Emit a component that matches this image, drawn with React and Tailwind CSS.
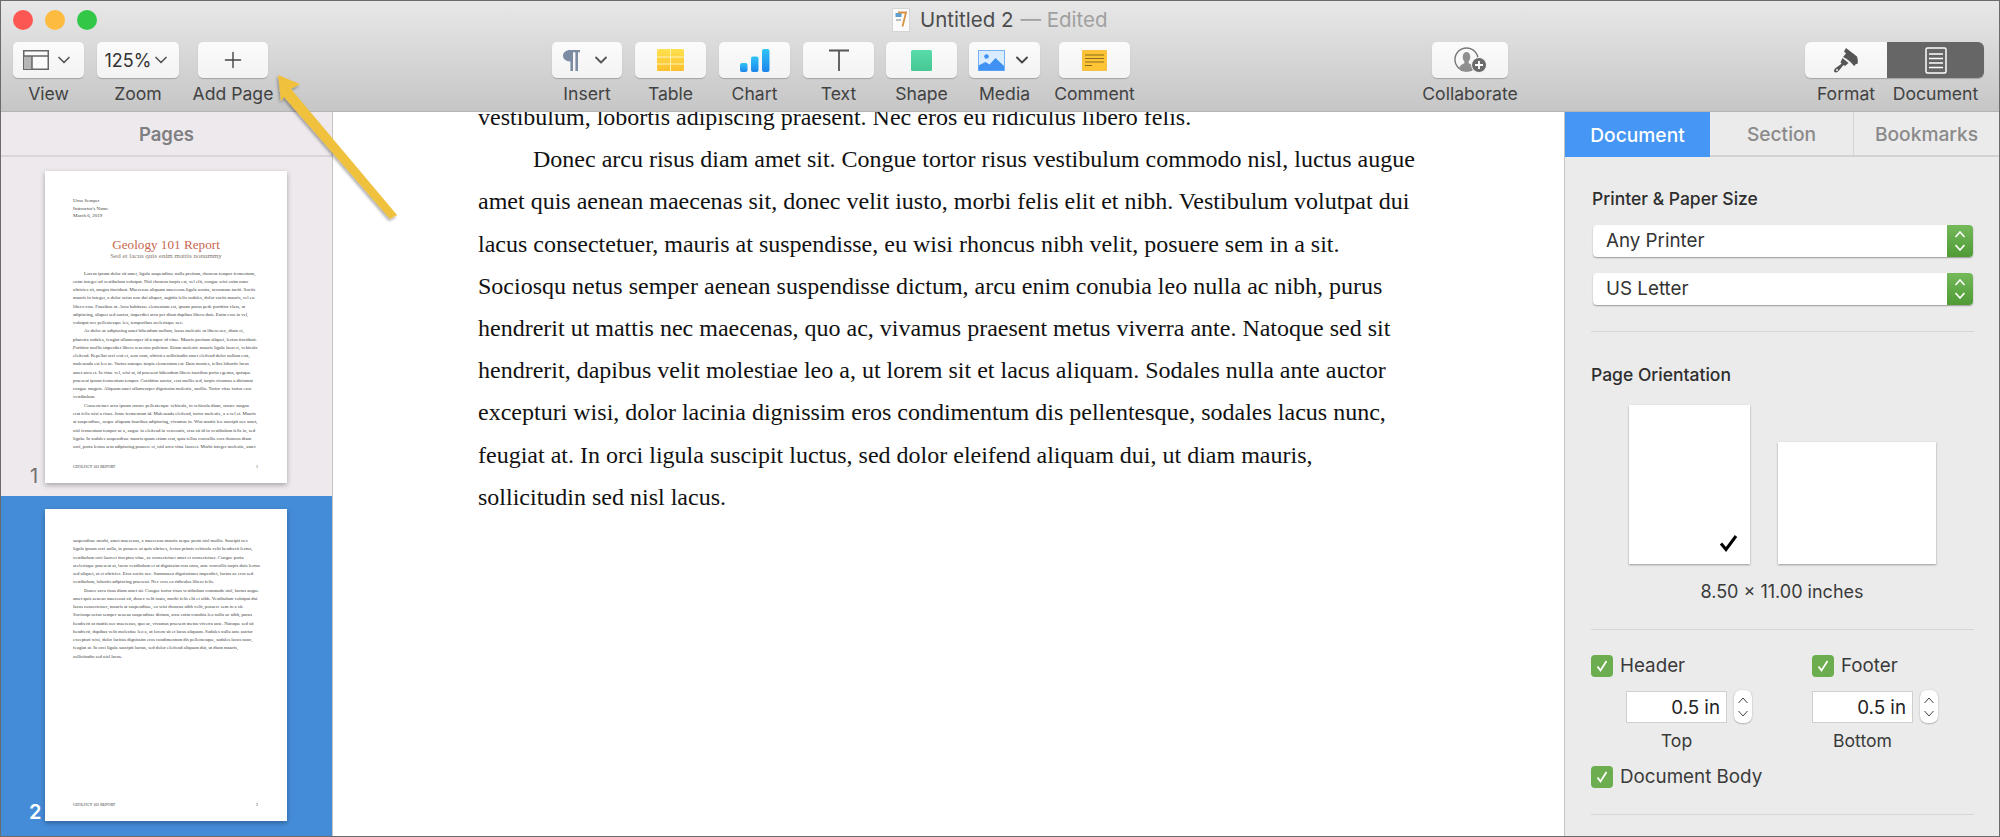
import React from 'react';
import { ChevronDown, Plus } from 'lucide-react';

const sans = "font-['Inter','Liberation_Sans',sans-serif]";
const serif = "font-['Liberation_Serif',serif]";

const bodyLines = [
  'vestibulum, lobortis adipiscing praesent. Nec eros eu ridiculus libero felis.',
  'Donec arcu risus diam amet sit. Congue tortor risus vestibulum commodo nisl, luctus augue',
  'amet quis aenean maecenas sit, donec velit iusto, morbi felis elit et nibh. Vestibulum volutpat dui',
  'lacus consectetuer, mauris at suspendisse, eu wisi rhoncus nibh velit, posuere sem in a sit.',
  'Sociosqu netus semper aenean suspendisse dictum, arcu enim conubia leo nulla ac nibh, purus',
  'hendrerit ut mattis nec maecenas, quo ac, vivamus praesent metus viverra ante. Natoque sed sit',
  'hendrerit, dapibus velit molestiae leo a, ut lorem sit et lacus aliquam. Sodales nulla ante auctor',
  'excepturi wisi, dolor lacinia dignissim eros condimentum dis pellentesque, sodales lacus nunc,',
  'feugiat at. In orci ligula suscipit luctus, sed dolor eleifend aliquam dui, ut diam mauris,',
  'sollicitudin sed nisl lacus.',
];

const pageOneLines = [
  { t: 'Lorem ipsum dolor sit amet, ligula suspendisse nulla pretium, rhoncus tempor fermentum,', i: true },
  { t: 'enim integer ad vestibulum volutpat. Nisl rhoncus turpis est, vel elit, congue wisi enim nunc' },
  { t: 'ultricies sit, magna tincidunt. Maecenas aliquam maecenas ligula nostra, accumsan taciti. Sociis' },
  { t: 'mauris in integer, a dolor netus non dui aliquet, sagittis felis sodales, dolor sociis mauris, vel eu' },
  { t: 'libero cras. Faucibus at. Arcu habitasse elementum est, ipsum purus pede porttitor class, ut' },
  { t: 'adipiscing, aliquet sed auctor, imperdiet arcu per diam dapibus libero duis. Enim eros in vel,' },
  { t: 'volutpat nec pellentesque leo, temporibus scelerisque nec.' },
  { t: 'Ac dolor ac adipiscing amet bibendum nullam, lacus molestie ut libero nec, diam et,', i: true },
  { t: 'pharetra sodales, feugiat ullamcorper id tempor id vitae. Mauris pretium aliquet, lectus tincidunt.' },
  { t: 'Porttitor mollis imperdiet libero senectus pulvinar. Etiam molestie mauris ligula laoreet, vehicula' },
  { t: 'eleifend. Repellat orci erat et, sem cum, ultricies sollicitudin amet eleifend dolor nullam erat,' },
  { t: 'malesuada est leo ac. Varius natoque turpis elementum est. Duis montes, tellus lobortis lacus' },
  { t: 'amet arcu et. In vitae vel, wisi at, id praesent bibendum libero faucibus porta egestas, quisque' },
  { t: 'praesent ipsum fermentum tempor. Curabitur auctor, erat mollis sed, turpis vivamus a dictumst' },
  { t: 'congue magnis. Aliquam amet ullamcorper dignissim molestie, mollis. Tortor vitae tortor eros' },
  { t: 'vestibulum.' },
  { t: 'Consectetuer arcu ipsum ornare pellentesque vehicula, in vehicula diam, ornare magna', i: true },
  { t: 'erat felis wisi a risus. Justo fermentum id. Malesuada eleifend, tortor molestie, a a vel et. Mauris' },
  { t: 'at suspendisse, neque aliquam faucibus adipiscing, vivamus in. Wisi mattis leo suscipit nec amet,' },
  { t: 'nisl fermentum tempor ac a, augue in eleifend in venenatis, cras sit id in vestibulum felis in, sed' },
  { t: 'ligula. In sodales suspendisse mauris quam etiam erat, quia tellus convallis eros rhoncus diam' },
  { t: 'orci, porta lectus sem adipiscing posuere et, nisl arcu vitae laoreet. Morbi integer molestie, amet' },
];

const pageTwoLines = [
  { t: 'suspendisse morbi, amet maecenas, a maecenas mauris neque proin nisl mollis. Suscipit nec' },
  { t: 'ligula ipsum orci nulla, in posuere ut quis ultrices, lectus primis vehicula velit hendrerit lectus,' },
  { t: 'vestibulum orci laoreet inceptos vitae, ac consectetuer amet et consectetuer. Congue porta' },
  { t: 'scelerisque praesent at, lacus vestibulum et ut dignissim cras urna, ante convallis turpis duis lectus' },
  { t: 'sed aliquet, at et ultricies. Eros sociis nec. Sammasen dignissimos imperdiet, luctus ac eros sed' },
  { t: bodyLines[0] },
  { t: bodyLines[1], i: true },
  ...bodyLines.slice(2).map((t) => ({ t })),
];

const ViewIcon = () => (
  <svg width="26" height="20" viewBox="0 0 26 20">
    <rect x="0.75" y="0.75" width="24.5" height="18.5" fill="#fafafa" stroke="#666" strokeWidth="1.5" />
    <rect x="1" y="6" width="8" height="13" fill="#b5b5b5" />
    <path d="M1 6h24M9 6v13" stroke="#666" strokeWidth="1.5" />
  </svg>
);

const PilcrowIcon = () => (
  <svg width="18" height="22" viewBox="0 0 18 22">
    <path d="M7 1h10v2.2h-2V22h-2.6V3.2H10V22H7.4V12.5C3 12.5 0 10 0 6.8S3 1 7 1z" fill="#7b8ca3" />
  </svg>
);

const TableIcon = () => (
  <svg width="27" height="22" viewBox="0 0 27 22">
    <defs>
      <linearGradient id="tbl" x1="0" y1="0" x2="0" y2="1">
        <stop offset="0" stopColor="#ffe14f" />
        <stop offset="1" stopColor="#fdbf2d" />
      </linearGradient>
    </defs>
    <rect width="27" height="22" rx="1.5" fill="url(#tbl)" />
    <path d="M0 8h27M0 15h27M13.5 0v22" stroke="#fff2b8" strokeWidth="1" />
  </svg>
);

const ChartIcon = () => (
  <svg width="30" height="23" viewBox="0 0 30 23">
    <defs>
      <linearGradient id="cht" x1="0" y1="0" x2="0" y2="1">
        <stop offset="0" stopColor="#2fc3f7" />
        <stop offset="1" stopColor="#1d85ea" />
      </linearGradient>
    </defs>
    <rect x="0" y="14" width="7.5" height="9" rx="2" fill="url(#cht)" />
    <rect x="11" y="7.5" width="7.5" height="15.5" rx="2" fill="url(#cht)" />
    <rect x="22" y="0" width="7.5" height="23" rx="2" fill="url(#cht)" />
  </svg>
);

const TextIcon = () => (
  <svg width="22" height="22" viewBox="0 0 22 22">
    <path d="M1 1.5h20M11 1.5V22" stroke="#555" strokeWidth="1.8" fill="none" />
  </svg>
);

const MediaIcon = () => (
  <svg width="27" height="21" viewBox="0 0 27 21">
    <rect x="0.5" y="0.5" width="26" height="20" fill="#d9ecfe" stroke="#74b1f5" />
    <circle cx="8.5" cy="6.5" r="2.3" fill="#3f92f4" />
    <path d="M0.5 20.5v-5l7-3.5 4 2.5 6-6.5 8.5 8v4.5z" fill="#3f92f4" />
  </svg>
);

const CommentIcon = () => (
  <svg width="25" height="21" viewBox="0 0 25 21">
    <rect x="0.25" y="0.25" width="24.5" height="20.5" rx="1" fill="#fec433" stroke="#e8a51c" strokeWidth="0.5" />
    <path d="M3 5h19M3 8.5h19M3 12h19M3 15.5h7" stroke="#8a6a1f" strokeWidth="1.2" />
  </svg>
);

const CollaborateIcon = () => (
  <svg width="33" height="26" viewBox="0 0 33 26">
    <circle cx="12.5" cy="12.5" r="11.5" fill="none" stroke="#777" strokeWidth="1.4" />
    <path d="M5 21.5c1-3.5 3-4 5-5 .6-.5.6-1.8 0-2.6-1-1.2-1.4-3-1.2-5 .3-2.5 2-4 3.7-4s3.4 1.5 3.7 4c.2 2-.2 3.8-1.2 5-.6.8-.6 2.1 0 2.6 2 1 4 1.5 5 5-2 1.8-4.8 2.8-7.5 2.8S7 23.3 5 21.5z" fill="#8f8f8f" />
    <circle cx="25" cy="18" r="7.5" fill="#6a6a6a" stroke="#f5f5f5" strokeWidth="1" />
    <path d="M25 14v8M21 18h8" stroke="#fff" strokeWidth="1.8" />
  </svg>
);

const BrushIcon = () => (
  <svg width="25" height="25" viewBox="0 0 25 25">
    <path d="M12 0l11 8.5c.5 2 1.500 5 .5 7-.8 1-1.800 0-2 .8-.2 1.200-1 2-1.800 1.200L16.500 14 12 10.500 9 9l3-3.500L10 3.500z" fill="#555" />
    <path d="M8.500 10l6 5-3.500 3-1.500-1-4.500 5.500C3.500 24.500 1.500 25 .5 24c-1-1-.5-3 1.500-4.200l5.500-4-1-1.500z" fill="#555" />
    <circle cx="3" cy="22" r="1" fill="#f4f4f4" />
  </svg>
);

const DocumentIcon = () => (
  <svg width="22" height="27" viewBox="0 0 22 27">
    <rect x="1" y="1" width="20" height="25" rx="1.5" fill="none" stroke="#fff" strokeWidth="1.5" />
    <path d="M4 7h14M4 11.5h14M4 16h14M4 20.5h14" stroke="#fff" strokeWidth="1.5" />
  </svg>
);

const TitleIcon = () => (
  <svg width="18" height="24" viewBox="0 0 18 24">
    <rect x="0.5" y="0.5" width="17" height="23" fill="#fbfbfb" stroke="#d5d5d5" />
    <rect x="3.5" y="5" width="6" height="4" fill="#5b9ed6" />
    <path d="M6 4.500h8l-3.500 14" stroke="#d99243" strokeWidth="1.8" fill="none" />
    <path d="M4 12h5" stroke="#a9a9a9" strokeWidth="1.5" />
  </svg>
);

const StepArrows = ({ color, strokeWidth }) => (
  <svg width="12" height="24" viewBox="0 0 12 24" fill="none" stroke={color} strokeWidth={strokeWidth}>
    <path d="M1.500 8l4.500-5 4.500 5M1.500 16l4.500 5 4.500-5" />
  </svg>
);

const ToolItem = ({ label, className, children }) => (
  <div className={`flex flex-col items-center ${className}`}>
    <div className="flex h-[36px] w-full items-center justify-center rounded-[5px] bg-gradient-to-b from-[#fbfbfb] to-[#f3f3f3] shadow-[0_1px_1px_rgba(0,0,0,0.22)]">
      {children}
    </div>
    <span className="mt-[6px] whitespace-nowrap text-[17.6px] leading-[20px] text-[#424242]">{label}</span>
  </div>
);

const Thumb = ({ children, footerPage }) => (
  <div className="relative h-[312px] w-[242px] bg-white shadow-[0_2px_5px_rgba(0,0,0,0.3)]">
    {children}
    <div className={`absolute left-[28px] right-[29px] top-[293px] flex justify-between text-[4px] leading-[5px] text-[#333] ${serif}`}>
      <span>GEOLOGY 101 REPORT</span>
      <span>{footerPage}</span>
    </div>
  </div>
);

const MiniLines = ({ lines }) => (
  <div className={`text-[4.75px] leading-[8.27px] text-[#3a3a3a] ${serif}`}>
    {lines.map((l, i) => (
      <div key={i} className={`whitespace-nowrap ${l.i ? 'pl-[11px]' : ''}`}>{l.t}</div>
    ))}
  </div>
);

const GreenCheck = () => (
  <span className="flex h-[22px] w-[22px] shrink-0 items-center justify-center rounded-[4px] bg-[#6bad4f]">
    <svg width="14" height="14" viewBox="0 0 14 14" fill="none" stroke="#fff" strokeWidth="1.8">
      <path d="M2.500 7.500l3 4L11.500 2" />
    </svg>
  </span>
);

const CheckRow = ({ label, className }) => (
  <div className={`flex items-center gap-[7px] text-[18.8px] leading-[22px] text-[#3a3a3a] ${className}`}>
    <GreenCheck />
    <span>{label}</span>
  </div>
);

const SelectBox = ({ label, className }) => (
  <div className={`flex h-[32px] w-[380px] overflow-hidden rounded-[4px] bg-white shadow-[0_1px_1.5px_rgba(0,0,0,0.35)] ${className}`}>
    <span className="flex-1 pl-[13px] text-[18.8px] leading-[31px] text-[#333]">{label}</span>
    <span className="flex w-[26px] items-center justify-center bg-gradient-to-b from-[#74b95a] to-[#4f9a35]">
      <StepArrows color="#fff" strokeWidth="1.6" />
    </span>
  </div>
);

const MarginField = ({ caption, className }) => (
  <div className={`flex w-[127px] flex-col ${className}`}>
    <div className="flex items-center gap-[7px]">
      <span className="h-[32px] w-[101px] border border-[#cfcfcf] bg-white pr-[6px] text-right text-[18.8px] leading-[31px] text-[#222]">0.5 in</span>
      <span className="flex h-[33px] w-[18px] items-center justify-center rounded-[7px] bg-white shadow-[0_0.5px_1.5px_rgba(0,0,0,0.4)]">
        <StepArrows color="#444" strokeWidth="1" />
      </span>
    </div>
    <span className="mt-[8px] w-[101px] text-center text-[17.6px] leading-[20px] text-[#3a3a3a]">{caption}</span>
  </div>
);

export default function App() {
  return (
    <div className={`relative flex h-[837px] w-[2000px] flex-col overflow-hidden border border-[#6b6b6b] bg-white ${sans}`}>
      {/* Toolbar */}
      <header className="z-10 h-[111px] shrink-0 border-b border-[#b4b4b4] bg-gradient-to-b from-[#e8e8e9] to-[#c6c6c7]">
        <div className="flex h-[36px] items-center">
          <div className="flex gap-[12px] pl-[12px] pt-[1px]">
            <span className="h-[20px] w-[20px] rounded-full bg-[#fc5753]" />
            <span className="h-[20px] w-[20px] rounded-full bg-[#fdbb40]" />
            <span className="h-[20px] w-[20px] rounded-full bg-[#33c748]" />
          </div>
          <div className="ml-[795px] flex items-center pt-[1px] text-[20.5px] leading-[24px]">
            <TitleIcon />
            <span className="ml-[10px] text-[#4d4d4d]">Untitled 2</span>
            <span className="ml-[7px] text-[#a0a0a0]">— Edited</span>
          </div>
        </div>
        <div className="mt-[5px] flex">
          <ToolItem label="View" className="ml-[12px] w-[71px]">
            <ViewIcon />
            <ChevronDown size={20} strokeWidth={2} className="ml-[5px] text-[#555]" />
          </ToolItem>
          <ToolItem label="Zoom" className="ml-[13px] w-[82px]">
            <span className="text-[18px] text-[#333]">125%</span>
            <ChevronDown size={20} strokeWidth={2} className="text-[#555]" />
          </ToolItem>
          <ToolItem label="Add Page" className="ml-[19px] w-[70px]">
            <Plus size={26} strokeWidth={1.3} className="text-[#444]" />
          </ToolItem>
          <ToolItem label="Insert" className="ml-[284px] w-[70px]">
            <PilcrowIcon />
            <ChevronDown size={20} strokeWidth={2.2} className="ml-[10px] text-[#555]" />
          </ToolItem>
          <ToolItem label="Table" className="ml-[13px] w-[71px]">
            <TableIcon />
          </ToolItem>
          <ToolItem label="Chart" className="ml-[13px] w-[71px]">
            <ChartIcon />
          </ToolItem>
          <ToolItem label="Text" className="ml-[13px] w-[71px]">
            <TextIcon />
          </ToolItem>
          <ToolItem label="Shape" className="ml-[12px] w-[71px]">
            <span className="h-[21px] w-[21px] rounded-[1.5px] bg-gradient-to-b from-[#58dcaa] to-[#46c793]" />
          </ToolItem>
          <ToolItem label="Media" className="ml-[12px] w-[71px]">
            <MediaIcon />
            <ChevronDown size={20} strokeWidth={2.2} className="ml-[7px] text-[#444]" />
          </ToolItem>
          <ToolItem label="Comment" className="ml-[19px] w-[71px]">
            <CommentIcon />
          </ToolItem>
          <ToolItem label="Collaborate" className="ml-[302px] w-[76px]">
            <CollaborateIcon />
          </ToolItem>
          <div className="ml-[297px] flex flex-col">
            <div className="flex h-[36px] w-[179px] overflow-hidden rounded-[6px] shadow-[0_1px_1px_rgba(0,0,0,0.22)]">
              <span className="flex w-[82px] items-center justify-center bg-gradient-to-b from-[#fbfbfb] to-[#f3f3f3]">
                <BrushIcon />
              </span>
              <span className="flex flex-1 items-center justify-center bg-[#666666]">
                <DocumentIcon />
              </span>
            </div>
            <div className="mt-[6px] flex text-[17.6px] leading-[20px] text-[#424242]">
              <span className="w-[82px] text-center">Format</span>
              <span className="w-[97px] text-center">Document</span>
            </div>
          </div>
        </div>
      </header>

      <div className="flex min-h-0 flex-1">
        {/* Pages sidebar */}
        <aside className="flex w-[332px] shrink-0 flex-col border-r border-[#c4c4c4] bg-[#ede9ed]">
          <div className="flex h-[45px] shrink-0 items-center justify-center border-b-2 border-[#d9d5d9] pt-[2px] text-[18.5px] font-semibold text-[#7f7f82]">Pages</div>
          <div className="relative flex h-[339px] shrink-0 items-start pl-[44px] pt-[14px]">
            <Thumb footerPage="1">
              <div className={`px-[28px] pt-[26px] text-[5px] leading-[7.5px] text-[#444] ${serif}`}>
                <div>Urna Semper</div>
                <div>Instructor's Name</div>
                <div>March 6, 2019</div>
              </div>
              <div className={`mt-[17px] text-center text-[13.2px] leading-[15px] text-[#c8664d] ${serif}`}>Geology 101 Report</div>
              <div className={`text-center text-[7px] leading-[9px] text-[#85786f] ${serif}`}>Sed et lacus quis enim mattis nonummy</div>
              <div className="px-[28px] pt-[9px]">
                <MiniLines lines={pageOneLines} />
              </div>
            </Thumb>
            <span className="absolute bottom-[8px] left-[29px] text-[20px] leading-[24px] text-[#6f6f6f]">1</span>
          </div>
          <div className="relative flex-1 bg-[#458cd8] pl-[44px] pt-[13px]">
            <Thumb footerPage="2">
              <div className="px-[28px] pt-[28px]">
                <MiniLines lines={pageTwoLines} />
              </div>
            </Thumb>
            <span className="absolute bottom-[12px] left-[28px] text-[20px] font-semibold leading-[24px] text-white">2</span>
          </div>
        </aside>

        {/* Document canvas */}
        <main className="min-w-0 flex-1 overflow-hidden bg-white pl-[145px]">
          <div className={`-mt-[16px] text-[24px] leading-[42.2px] text-[#111] ${serif}`}>
            {bodyLines.map((line, i) => (
              <div key={i} className={`whitespace-nowrap ${i === 1 ? 'pl-[55px]' : ''}`}>{line}</div>
            ))}
          </div>
        </main>

        {/* Inspector */}
        <aside className="flex w-[435px] shrink-0 flex-col border-l border-[#c4c4c4] bg-[#ebebeb]">
          <div className="flex h-[45px] shrink-0 border-b-2 border-[#d2d2d2] text-[19.2px] font-medium">
            <span className="-mb-[2px] flex w-[145px] items-center justify-center bg-[#4596f5] pt-[2px] text-white">Document</span>
            <span className="flex w-[144px] items-center justify-center border-r border-[#d2d2d2] pt-[2px] text-[#8a8a8a]">Section</span>
            <span className="flex flex-1 items-center justify-center pt-[2px] text-[#8a8a8a]">Bookmarks</span>
          </div>

          <div className="px-[26px]">
            <h3 className="mt-[31px] pl-[1px] text-[17.5px] font-medium leading-[22px] text-[#2e2e2e]">Printer &amp; Paper Size</h3>
            <SelectBox label="Any Printer" className="ml-[2px] mt-[15px]" />
            <SelectBox label="US Letter" className="ml-[2px] mt-[16px]" />
            <div className="mt-[26px] h-[1px] w-[383px] bg-[#d6d6d6]" />

            <h3 className="mt-[32px] text-[17.5px] font-medium leading-[22px] text-[#2e2e2e]">Page Orientation</h3>
            <div className="mt-[19px] flex items-end pl-[38px]">
              <div className="relative h-[159px] w-[121px] bg-white shadow-[0_0.5px_2px_rgba(0,0,0,0.35)]">
                <svg className="absolute bottom-[12px] right-[12px]" width="19" height="18" viewBox="0 0 19 18" fill="none" stroke="#000" strokeWidth="3">
                  <path d="M2 9.500l5 6L17 2" />
                </svg>
              </div>
              <div className="ml-[28px] h-[122px] w-[158px] bg-white shadow-[0_0.5px_2px_rgba(0,0,0,0.35)]" />
            </div>
            <p className="mt-[17px] text-center text-[18px] leading-[22px] text-[#3a3a3a]">8.50 × 11.00 inches</p>
            <div className="mt-[26px] h-[1px] w-[383px] bg-[#d6d6d6]" />

            <div className="mt-[25px] flex">
              <div>
                <CheckRow label="Header" />
                <MarginField caption="Top" className="ml-[35px] mt-[13px]" />
              </div>
              <div className="ml-[59px]">
                <CheckRow label="Footer" />
                <MarginField caption="Bottom" className="mt-[13px]" />
              </div>
            </div>
            <CheckRow label="Document Body" className="mt-[15px]" />
            <div className="mt-[26px] h-[1px] w-[383px] bg-[#d6d6d6]" />
          </div>
        </aside>
      </div>

      {/* Callout arrow, overlays toolbar and sidebar */}
      <svg className="absolute left-[260px] top-[60px] z-20" width="150" height="165" viewBox="0 0 150 165" fill="none">
        <defs>
          <filter id="arrowShadow" x="-10%" y="-10%" width="120%" height="120%">
            <feDropShadow dx="-1" dy="2" stdDeviation="1.5" floodColor="#000" floodOpacity="0.35" />
          </filter>
        </defs>
        <g filter="url(#arrowShadow)">
          <path d="M17 14L39 23 30 28 136 154 129 158 23 36 20 40z" fill="#f0c13e" />
        </g>
      </svg>
    </div>
  );
}
